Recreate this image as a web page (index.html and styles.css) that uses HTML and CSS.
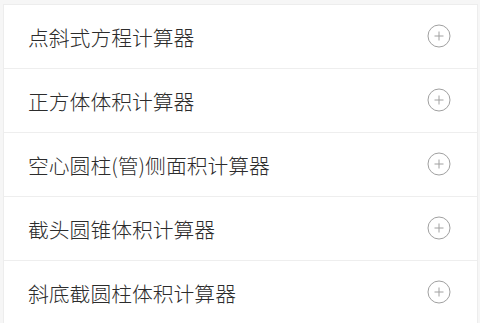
FILE: index.html
```html
<!DOCTYPE html>
<html lang="zh">
<head>
<meta charset="utf-8">
<link rel="stylesheet" href="styles.css">
</head>
<body>
<div class="card">
  <div class="row"><span class="title">点斜式方程计算器</span><svg class="plus" viewBox="0 0 24 24"><circle cx="12" cy="12" r="11" /><path d="M12 7.5v9M7.5 12h9"/></svg></div>
  <div class="row"><span class="title">正方体体积计算器</span><svg class="plus" viewBox="0 0 24 24"><circle cx="12" cy="12" r="11" /><path d="M12 7.5v9M7.5 12h9"/></svg></div>
  <div class="row"><span class="title">空心圆柱(管)侧面积计算器</span><svg class="plus" viewBox="0 0 24 24"><circle cx="12" cy="12" r="11" /><path d="M12 7.5v9M7.5 12h9"/></svg></div>
  <div class="row"><span class="title">截头圆锥体积计算器</span><svg class="plus" viewBox="0 0 24 24"><circle cx="12" cy="12" r="11" /><path d="M12 7.5v9M7.5 12h9"/></svg></div>
  <div class="row"><span class="title">斜底截圆柱体积计算器</span><svg class="plus" viewBox="0 0 24 24"><circle cx="12" cy="12" r="11" /><path d="M12 7.5v9M7.5 12h9"/></svg></div>
</div>
</body>
</html>
```
FILE: styles.css
```css
html, body { margin: 0; padding: 0; }
body {
  background: #f6f6f6;
  padding: 4px 2px 0 3px;
  font-family: "Noto Sans CJK SC", "Noto Sans", sans-serif;
}
.card {
  background: #fff;
  border: 1px solid #ededed;
  border-bottom: none;
}
.row {
  height: 64px;
  display: flex;
  align-items: center;
  justify-content: space-between;
  padding: 1px 26px 0 24px;
  box-sizing: border-box;
  border-bottom: 1px solid #eeeeee;
}
.title {
  font-size: 20.8px;
  color: #2c2c2c;
  font-weight: 300;
  line-height: 1;
}
.plus {
  width: 24px;
  height: 24px;
  margin-bottom: 3px;
  fill: none;
  stroke: #a0a0a0;
  stroke-width: 1;
}
```
